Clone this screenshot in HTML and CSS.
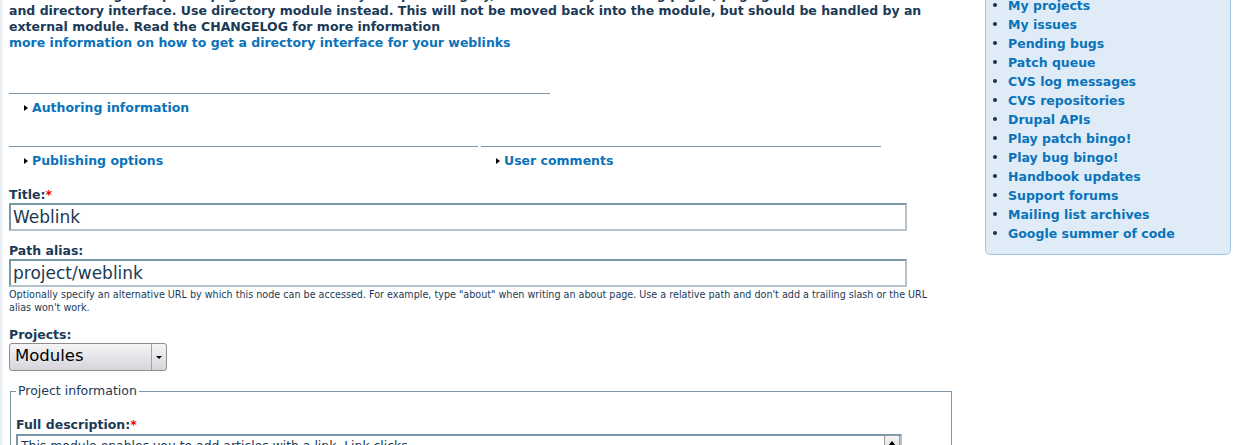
FILE: index.html
```html
<!DOCTYPE html>
<html lang="en">
<head>
    <meta charset="UTF-8">
    <title>Edit project: Weblink</title>
    <link rel="stylesheet" href="styles.css">
</head>
<body>
<div class="page">
    <div class="main">
        <p class="intro">Weblink no longer ships the page that listed every link per category, the taxonomy browsing pages, paging<br>and directory interface. Use directory module instead. This will not be moved back into the module, but should be handled by an<br>external module. Read the CHANGELOG for more information</p>
        <p class="more"><a href="#">more information on how to get a directory interface for your weblinks</a></p>

        <!--折叠的fieldset，只显示顶部的线和标题-->
        <div class="collapsible authoring">
            <a href="#"><span class="arrow"></span>Authoring information</a>
        </div>

        <div class="row">
            <div class="collapsible publishing">
                <a href="#"><span class="arrow"></span>Publishing options</a>
            </div>
            <div class="collapsible comments">
                <a href="#"><span class="arrow"></span>User comments</a>
            </div>
        </div>

        <div class="form-item">
            <label for="edit-title">Title:<span class="required">*</span></label>
            <input type="text" id="edit-title" class="form-text" value="Weblink">
        </div>

        <div class="form-item path">
            <label for="edit-path">Path alias:</label>
            <input type="text" id="edit-path" class="form-text" value="project/weblink">
            <div class="description">Optionally specify an alternative URL by which this node can be accessed. For example, type "about" when writing an about page. Use a relative path and don't add a trailing slash or the URL alias won't work.</div>
        </div>

        <div class="form-item projects">
            <label>Projects:</label>
            <div class="select">
                <span class="select-value">Modules</span>
                <span class="select-btn"><span class="down"></span></span>
            </div>
        </div>

        <fieldset class="project-info">
            <legend>Project information</legend>
            <div class="form-item">
                <label for="edit-body">Full description:<span class="required">*</span></label>
                <div class="textarea-wrap">
                    <textarea id="edit-body" rows="6">This module enables you to add articles with a link. Link clicks
are counted and the number of clicks is shown next to every link, so the most popular links can be listed in a block.</textarea>
                    <span class="scroll-up"><span class="up"></span></span>
                </div>
            </div>
        </fieldset>
    </div>

    <div class="sidebar">
        <div class="block">
            <ul class="menu">
                <li><a href="#">My account</a></li>
                <li><a href="#">Create content</a></li>
                <li><a href="#">My projects</a></li>
                <li><a href="#">My issues</a></li>
                <li><a href="#">Pending bugs</a></li>
                <li><a href="#">Patch queue</a></li>
                <li><a href="#">CVS log messages</a></li>
                <li><a href="#">CVS repositories</a></li>
                <li><a href="#">Drupal APIs</a></li>
                <li><a href="#">Play patch bingo!</a></li>
                <li><a href="#">Play bug bingo!</a></li>
                <li><a href="#">Handbook updates</a></li>
                <li><a href="#">Support forums</a></li>
                <li><a href="#">Mailing list archives</a></li>
                <li><a href="#">Google summer of code</a></li>
            </ul>
        </div>
    </div>
</div>
</body>
</html>
```

FILE: styles.css
```css
* {
    margin: 0;
    padding: 0;
    box-sizing: border-box;
}

body {
    font-family: "DejaVu Sans", Verdana, sans-serif;
    font-size: 12.5px;
    font-weight: bold;
    color: #1b3a56;
    background: linear-gradient(to right, #e2e9ef, #fff 4px);
    overflow: hidden;
}

a {
    color: #0a73ba;
    text-decoration: none;
}

/* 页面被滚动过，所以整体往上提 */
.page {
    display: flex;
    margin-top: -40px;
}

.main {
    width: 952px;
    padding-left: 9px;
}

.intro {
    margin-top: 27px;
    line-height: 16px;
    white-space: nowrap;
}

.more {
    line-height: 16px;
}

.collapsible {
    border-top: 1px solid #7b97a8;
    padding: 6px 0 0 15px;
    line-height: 16px;
}

.arrow {
    display: inline-block;
    width: 0;
    height: 0;
    border-left: 4px solid #000;
    border-top: 3.5px solid transparent;
    border-bottom: 3.5px solid transparent;
    margin-right: 4px;
    vertical-align: 1.5px;
}

.authoring {
    width: 541px;
    margin-top: 42px;
    margin-bottom: 30px;
}

.row {
    display: flex;
    gap: 3px;
    margin-bottom: 18px;
}

.publishing {
    width: 469px;
}

.comments {
    width: 400px;
}

.form-item label {
    display: block;
    line-height: 16px;
}

.required {
    color: #e00;
}

.form-text {
    display: block;
    width: 898px;
    height: 28px;
    border: 2px solid;
    border-color: #7b97a8 #b3c2cb #b3c2cb #7b97a8;
    padding: 0 2px;
    font-family: "DejaVu Sans", Verdana, sans-serif;
    font-size: 17px;
    color: #1b3a56;
    background: #fff;
    outline: none;
}

.path {
    margin-top: 12px;
}

.description {
    font-weight: normal;
    font-size: 9.6px;
    line-height: 13px;
    margin-top: 1px;
}

.projects {
    margin-top: 13px;
}

.select {
    display: flex;
    width: 158px;
    height: 28px;
    border: 1px solid #8d8d8d;
    border-radius: 3px;
    background: linear-gradient(#f5f5f7, #d5d5db);
}

.select-value {
    flex: 1;
    padding-left: 5px;
    font-weight: normal;
    font-size: 16.5px;
    line-height: 24px;
    color: #000;
}

.select-btn {
    width: 15px;
    border-left: 1px solid #a3a3a3;
    display: flex;
    align-items: center;
    justify-content: center;
}

.down {
    width: 0;
    height: 0;
    border-top: 3px solid #000;
    border-left: 3.5px solid transparent;
    border-right: 3.5px solid transparent;
}

.project-info {
    margin: 12px 0 0 1px;
    width: 942px;
    border: 1px solid #7b97a8;
    padding: 18px 5px 0;
}

.project-info legend {
    font-weight: normal;
    line-height: 16px;
    padding: 0 2px;
}

.project-info label {
    margin-bottom: 1px;
}

.textarea-wrap {
    position: relative;
    width: 886px;
}

textarea {
    display: block;
    width: 886px;
    height: 80px;
    border: 2px solid;
    border-color: #7b97a8 #b3c2cb #b3c2cb #7b97a8;
    padding: 2px 20px 2px 3px;
    font-family: "DejaVu Sans", Verdana, sans-serif;
    font-size: 12.4px;
    line-height: 16px;
    color: #1b3a56;
    resize: none;
    overflow: hidden;
}

.scroll-up {
    position: absolute;
    top: 1px;
    right: 2px;
    width: 16px;
    height: 16px;
    border: 1px solid #9a9a9a;
    border-radius: 2px;
    background: linear-gradient(#f6f6f6, #dcdcdc);
    display: flex;
    align-items: center;
    justify-content: center;
}

.up {
    width: 0;
    height: 0;
    border-bottom: 5px solid #000;
    border-left: 4px solid transparent;
    border-right: 4px solid transparent;
}

.sidebar {
    width: 246px;
    margin-left: 33px;
}

.block {
    margin-top: -8px;
    background: #dfecf7;
    border: 1px solid #a4c3dc;
    border-radius: 5px;
    padding: 5px 0 11px;
}

.menu {
    list-style: none;
    padding-left: 22px;
    line-height: 19px;
}

.menu li::before {
    content: "";
    display: inline-block;
    width: 4px;
    height: 4px;
    border-radius: 2px;
    background: #143250;
    margin-left: -15px;
    margin-right: 11px;
    vertical-align: 3px;
}
```
